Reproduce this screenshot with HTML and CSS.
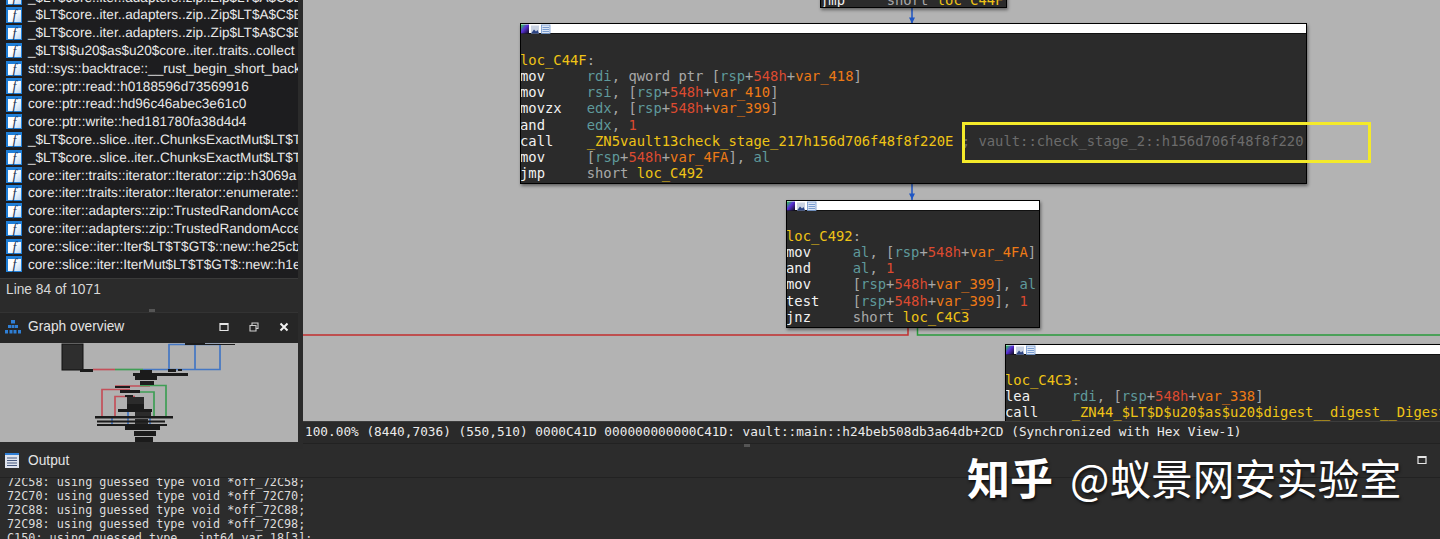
FILE: index.html
```html
<!DOCTYPE html>
<html lang="en">
<head>
<meta charset="utf-8">
<title>IDA graph view</title>
<link rel="stylesheet" href="styles.css">
</head>
<body>
<svg class="defs" width="0" height="0" aria-hidden="true">
  <defs>
    <linearGradient id="rainbow" x1="0" x2="1" y1="0" y2="1">
      <stop offset="0" stop-color="#2bd04a"/><stop offset=".45" stop-color="#5a30d8"/><stop offset="1" stop-color="#0c0c18"/>
    </linearGradient>
    <symbol id="node-icons" viewBox="0 0 30 10">
      <rect x="0" y="0.500" width="8" height="9" fill="url(#rainbow)"/>
      <rect x="10" y="1.500" width="8" height="8" fill="#c9d2e2"/>
      <path d="M10 9.500l3-4 2 2 1.500-1.500 1.500 3.500z" fill="#2c4484"/>
      <rect x="20.500" y="1" width="8.500" height="8.500" fill="#dbe5f4" stroke="#6e94cc" stroke-width=".8"/>
      <path d="M21.500 3.500h6.500M21.500 5.500h6.500M21.500 7.500h6.500" stroke="#6e94cc" stroke-width=".9"/>
    </symbol>
  </defs>
</svg>
<div class="app">
  <div class="workspace">
    <aside class="left">
      <ul class="func-list">
        <li class="func"><span class="f-icon">f</span><span class="f-name">_$LT$core..iter..adapters..zip..Zip$LT$A$C$B</span></li>
        <li class="func"><span class="f-icon">f</span><span class="f-name">_$LT$core..iter..adapters..zip..Zip$LT$A$C$B</span></li>
        <li class="func"><span class="f-icon">f</span><span class="f-name">_$LT$core..iter..adapters..zip..Zip$LT$A$C$B</span></li>
        <li class="func"><span class="f-icon">f</span><span class="f-name">_$LT$I$u20$as$u20$core..iter..traits..collect</span></li>
        <li class="func"><span class="f-icon">f</span><span class="f-name">std::sys::backtrace::__rust_begin_short_backtrace</span></li>
        <li class="func"><span class="f-icon">f</span><span class="f-name">core::ptr::read::h0188596d73569916</span></li>
        <li class="func"><span class="f-icon">f</span><span class="f-name">core::ptr::read::hd96c46abec3e61c0</span></li>
        <li class="func"><span class="f-icon">f</span><span class="f-name">core::ptr::write::hed181780fa38d4d4</span></li>
        <li class="func"><span class="f-icon">f</span><span class="f-name">_$LT$core..slice..iter..ChunksExactMut$LT$T$GT$</span></li>
        <li class="func"><span class="f-icon">f</span><span class="f-name">_$LT$core..slice..iter..ChunksExactMut$LT$T$GT$</span></li>
        <li class="func"><span class="f-icon">f</span><span class="f-name">core::iter::traits::iterator::Iterator::zip::h3069a</span></li>
        <li class="func"><span class="f-icon">f</span><span class="f-name">core::iter::traits::iterator::Iterator::enumerate::</span></li>
        <li class="func"><span class="f-icon">f</span><span class="f-name">core::iter::adapters::zip::TrustedRandomAccess</span></li>
        <li class="func"><span class="f-icon">f</span><span class="f-name">core::iter::adapters::zip::TrustedRandomAccess</span></li>
        <li class="func"><span class="f-icon">f</span><span class="f-name">core::slice::iter::Iter$LT$T$GT$::new::he25cb</span></li>
        <li class="func"><span class="f-icon">f</span><span class="f-name">core::slice::iter::IterMut$LT$T$GT$::new::h1e</span></li>
      </ul>
      <div class="line-info"><span>Line 84 of 1071</span><i class="grip"></i></div>
      <div class="overview-head">
        <svg class="tree-icon" width="16" height="14" viewBox="0 0 16 14"><path d="M6 0h4v3.500H6zM3 5h3v3H3zM10 5h3v3h-3zM6.500 5h3v3h-3zM0 10h3v3.500H0zM4.500 10h3v3.500h-3zM8.500 10h3v3.500h-3zM13 10h3v3.500h-3z" fill="#2f7fd6"/></svg>
        <span class="overview-title">Graph overview</span>
        <span class="win-btns">
          <svg width="10" height="10" viewBox="0 0 10 10"><path d="M1 1.500h8v7H1zM1 2.500h8" fill="none" stroke="#e6e6e6" stroke-width="1.200"/></svg>
          <svg width="10" height="10" viewBox="0 0 10 10"><path d="M1 3.500h6v5.500H1zM3 3.500V1h6v5.500H7" fill="none" stroke="#d0d0d0" stroke-width="1.100"/></svg>
          <svg width="10" height="10" viewBox="0 0 10 10"><path d="M1.500 1.500l7 7M8.500 1.500l-7 7" stroke="#f2f2f2" stroke-width="2"/></svg>
        </span>
      </div>
      <div class="overview-map">
        <svg width="298" height="99" viewBox="0 343 298 99">
          <g fill="none" stroke-width="1.700">
            <path d="M93 369.500H115" stroke="#c4505a"/>
            <path d="M115 369.500H143" stroke="#3f9e55"/>
            <path d="M143 369.500H220V344M169 344V369.500M195 344V369.500M168.500 344.500H220" stroke="#4477c4"/>
            <path d="M115 386H150" stroke="#c4505a"/>
            <path d="M102 417V389.500H130M115 417V396.500H135" stroke="#c4505a"/>
            <path d="M166 417V385.500H140M154 417V392H125" stroke="#3f9e55"/>
            <path d="M112 417V424M128 410V424M150 417V424" stroke="#4477c4"/>
          </g>
          <g fill="#1b1b1b">
            <rect x="62" y="344" width="21" height="26" fill="#2e2e2e" stroke="#111"/>
            <rect x="80" y="369" width="13" height="3"/>
            <rect x="185" y="343" width="20" height="2"/>
            <rect x="205" y="344" width="30" height="1"/>
            <rect x="168" y="369" width="8" height="3"/>
            <rect x="178" y="369" width="4" height="2"/>
            <rect x="140" y="370" width="12" height="3"/>
            <rect x="133" y="373" width="55" height="3"/>
            <rect x="135" y="376" width="22" height="4"/>
            <rect x="140" y="381" width="14" height="4"/>
            <rect x="115" y="386" width="15" height="2"/>
            <rect x="120" y="390" width="20" height="3"/>
            <rect x="125" y="395" width="8" height="2"/>
            <rect x="127" y="397" width="17" height="11" fill="#2b2b2b"/>
            <rect x="127" y="404" width="17" height="5"/>
            <rect x="118" y="409" width="34" height="3"/>
            <rect x="135" y="412" width="16" height="5" fill="#2b2b2b"/>
            <rect x="95" y="416" width="78" height="2.500"/>
            <rect x="135" y="419" width="13" height="6" fill="#2b2b2b"/>
            <rect x="97" y="420.500" width="68" height="2"/>
            <rect x="97" y="424" width="70" height="2"/>
            <rect x="125" y="426" width="35" height="4"/>
            <rect x="134" y="431" width="22" height="5"/>
            <rect x="135" y="437" width="18" height="5"/>
          </g>
        </svg>
      </div>
    </aside>
    <main class="main">
      <section class="graph">
        <svg class="edges" width="1137" height="421" viewBox="303 0 1137 421">
          <g fill="none" stroke-width="1.500">
            <path d="M912 8V23M912 184V200" stroke="#1f56c4"/>
            <path d="M908 328V335H303" stroke="#c22f2f"/>
            <path d="M917.500 328V335H1440" stroke="#2a9a3c"/>
          </g>
          <path d="M909 17.500h6l-3 6zM909 193.500h6l-3 6z" fill="#1f56c4"/>
        </svg>
        <article class="node node-a">
          <pre class="asm"><span class="m">jmp</span>     <span class="p">short</span> <span class="l">loc_C44F</span></pre>
        </article>
        <article class="node node-b">
          <header class="node-head"><svg width="30" height="10"><use href="#node-icons"/></svg></header>
          <pre class="asm">

<span class="l">loc_C44F</span><span class="p">:</span>
<span class="m">mov</span>     <span class="r">rdi</span><span class="p">, qword ptr [</span><span class="r">rsp</span><span class="p">+</span><span class="n">548h</span><span class="p">+</span><span class="v">var_418</span><span class="p">]</span>
<span class="m">mov</span>     <span class="r">rsi</span><span class="p">, [</span><span class="r">rsp</span><span class="p">+</span><span class="n">548h</span><span class="p">+</span><span class="v">var_410</span><span class="p">]</span>
<span class="m">movzx</span>   <span class="r">edx</span><span class="p">, [</span><span class="r">rsp</span><span class="p">+</span><span class="n">548h</span><span class="p">+</span><span class="v">var_399</span><span class="p">]</span>
<span class="m">and</span>     <span class="r">edx</span><span class="p">, </span><span class="n">1</span>
<span class="m">call</span>    <span class="l">_ZN5vault13check_stage_217h156d706f48f8f220E</span> <span class="c">; vault::check_stage_2::h156d706f48f8f220</span>
<span class="m">mov</span>     <span class="p">[</span><span class="r">rsp</span><span class="p">+</span><span class="n">548h</span><span class="p">+</span><span class="v">var_4FA</span><span class="p">], </span><span class="r">al</span>
<span class="m">jmp</span>     <span class="p">short</span> <span class="l">loc_C492</span></pre>
        </article>
        <article class="node node-c">
          <header class="node-head"><svg width="30" height="10"><use href="#node-icons"/></svg></header>
          <pre class="asm">

<span class="l">loc_C492</span><span class="p">:</span>
<span class="m">mov</span>     <span class="r">al</span><span class="p">, [</span><span class="r">rsp</span><span class="p">+</span><span class="n">548h</span><span class="p">+</span><span class="v">var_4FA</span><span class="p">]</span>
<span class="m">and</span>     <span class="r">al</span><span class="p">, </span><span class="n">1</span>
<span class="m">mov</span>     <span class="p">[</span><span class="r">rsp</span><span class="p">+</span><span class="n">548h</span><span class="p">+</span><span class="v">var_399</span><span class="p">], </span><span class="r">al</span>
<span class="m">test</span>    <span class="p">[</span><span class="r">rsp</span><span class="p">+</span><span class="n">548h</span><span class="p">+</span><span class="v">var_399</span><span class="p">], </span><span class="n">1</span>
<span class="m">jnz</span>     <span class="p">short</span> <span class="l">loc_C4C3</span></pre>
        </article>
        <article class="node node-d">
          <header class="node-head"><svg width="30" height="10"><use href="#node-icons"/></svg></header>
          <pre class="asm">

<span class="l">loc_C4C3</span><span class="p">:</span>
<span class="m">lea</span>     <span class="r">rdi</span><span class="p">, [</span><span class="r">rsp</span><span class="p">+</span><span class="n">548h</span><span class="p">+</span><span class="v">var_338</span><span class="p">]</span>
<span class="m">call</span>    <span class="l">_ZN44_$LT$D$u20$as$u20$digest__digest__Digest$GT$</span></pre>
        </article>
        <div class="highlight"></div>
      </section>
      <div class="status">100.00% (8440,7036) (550,510) 0000C41D 000000000000C41D: vault::main::h24beb508db3a64db+2CD (Synchronized with Hex View-1)</div>
      <i class="grip grip-status"></i>
    </main>
  </div>
  <section class="output">
    <header class="output-head">
      <svg width="14" height="15" viewBox="0 0 14 15"><rect width="14" height="15" fill="#dfe4ee"/><rect width="14" height="2" fill="#2f7fd6"/><path d="M2 5h10M2 7.500h10M2 10h10M2 12.500h10" stroke="#46587e" stroke-width="1.200"/></svg>
      <span class="output-title">Output</span>
      <svg class="output-btn" width="10" height="10" viewBox="0 0 10 10"><path d="M1 1.500h8v7H1zM1 2.500h8" fill="none" stroke="#e6e6e6" stroke-width="1.200"/></svg>
    </header>
    <div class="log-view">
      <pre class="log">72C58: using guessed type void *off_72C58;
72C70: using guessed type void *off_72C70;
72C88: using guessed type void *off_72C88;
72C98: using guessed type void *off_72C98;
C150: using guessed type __int64 var_18[3];</pre>
    </div>
  </section>
  <div class="watermark"><span class="wm-logo">知乎</span><span class="wm-handle">@蚁景网安实验室</span></div>
</div>
</body>
</html>
```
FILE: styles.css
```css
* { box-sizing: border-box; }
html, body { margin: 0; height: 100%; overflow: hidden; }
body { background: #2c2c2c; font-family: "Liberation Sans", Arial, sans-serif; }
.defs { position: absolute; }

.app { position: relative; width: 1440px; height: 539px; display: flex; flex-direction: column; overflow: hidden; }
.workspace { height: 449px; display: flex; flex: none; }
.grip { display: block; flex: none; width: 6px; height: 3px; margin: 0 auto; background: #555; }
.grip-status { margin: 0 0 0 441px; }

/* Left column */
.left { width: 303px; flex: none; display: flex; flex-direction: column; background: #2b2b2b; padding-right: 5px; }
.func-list { list-style: none; margin: -11.800px 0 0; padding: 0 0 4px; height: 291px; flex: none; overflow: hidden; background: #1d1d1f; border-bottom: 1px solid #3a3a3a; }
.func { height: 17.800px; display: flex; align-items: center; gap: 6px; padding-left: 6px; white-space: nowrap; overflow: hidden; }
.f-icon { flex: none; width: 16px; height: 15.500px; background: linear-gradient(135deg, #ffffff 40%, #bcd8f4); border: solid #1f7fd8; border-width: 3px 1px 1px 2px; color: #1e3554; font: italic 14px/11px "Liberation Serif", serif; text-align: center; }
.f-name { font-size: 13.600px; color: #e9e9e9; text-rendering: geometricPrecision; }
.line-info { height: 33px; flex: none; display: flex; flex-direction: column; justify-content: space-between; padding: 1px 0 0 6px; font-size: 13.750px; line-height: 20px; color: #d8d8d8; }
.overview-head { height: 31px; flex: none; display: flex; align-items: center; padding: 0 9px 3px 5px; background: #262626; border-top: 1px solid #333; }
.tree-icon { flex: none; }
.overview-title { margin-left: 7px; font-size: 13.750px; color: #e4e4e4; flex: 1; }
.win-btns { display: flex; gap: 20px; align-items: center; }
.overview-map { height: 99px; background: #b1b1b1; flex: none; overflow: hidden; }
.overview-map svg { display: block; }

/* Main column */
.main { flex: 1; min-width: 0; display: flex; flex-direction: column; }
.graph { position: relative; height: 421px; flex: none; overflow: hidden; background: #b3b3b3; }
.edges { position: absolute; left: 0; top: 0; }
.status { height: 23px; flex: none; padding: 0 0 0 2px; font: 12.750px/20px "DejaVu Sans Mono", monospace; color: #ececec; white-space: pre; background: #2a2a2a; border-top: 1px solid #3c3c3c; border-bottom: 1px solid #222; }

/* Graph nodes sit on a free canvas */
.node { position: absolute; background: #2b2b2b; border: 1px solid #000; box-shadow: 1px 2px 3px rgba(0,0,0,.45); overflow: hidden; }
.node-head { height: 10px; background: #fff; border-bottom: 1px solid #111; }
.node-head svg { display: block; }
.node-a { left: 517px; top: -11px; width: 187px; height: 19px; }
.node-b { left: 217px; top: 23px; width: 787px; height: 161px; }
.node-c { left: 483px; top: 200px; width: 254px; height: 128px; }
.node-d { left: 702px; top: 344px; width: 700px; height: 90px; }
.asm { margin: 0 0 0 -1px; padding: 1.500px 0 0; font: 13.850px/16.200px "DejaVu Sans Mono", monospace; color: #aaa; white-space: pre; }
.node-c .asm, .node-d .asm { padding-top: 0.500px; }
.m { color: #f2f2f2; }
.r { color: #5f9a9c; }
.p { color: #a8a8a8; }
.n { color: #dc4a30; }
.v { color: #ee7a16; }
.l { color: #efc416; }
.c { color: #6c6c6c; }
.highlight { position: absolute; left: 659px; top: 122px; width: 409px; height: 41px; border: 3px solid #f4ea2a; }

/* Output */
.output { flex: 1; min-height: 0; display: flex; flex-direction: column; background: #2c2c2c; overflow: hidden; }
.output-head { height: 29px; flex: none; display: flex; align-items: center; padding: 0 13px 6px 5px; gap: 9px; border-bottom: 1px solid #222; }
.output-title { font-size: 13.750px; color: #e4e4e4; flex: 1; }
.output-btn { flex: none; }
.log-view { flex: 1; min-height: 0; overflow: hidden; }
.log { margin: -3px 0 0; padding-left: 7px; font: 11.800px/14px "DejaVu Sans Mono", monospace; color: #dcdcdc; white-space: pre; }

/* Watermark overlay */
.watermark { position: absolute; left: 967px; top: 451px; font: 41.700px/50px "Noto Sans CJK SC", sans-serif; color: #fff; white-space: nowrap; text-shadow: 1px 2px 3px rgba(0,0,0,.7); }
.wm-logo { font-weight: 700; font-size: 43px; }
.wm-handle { margin-left: 17px; }
```
